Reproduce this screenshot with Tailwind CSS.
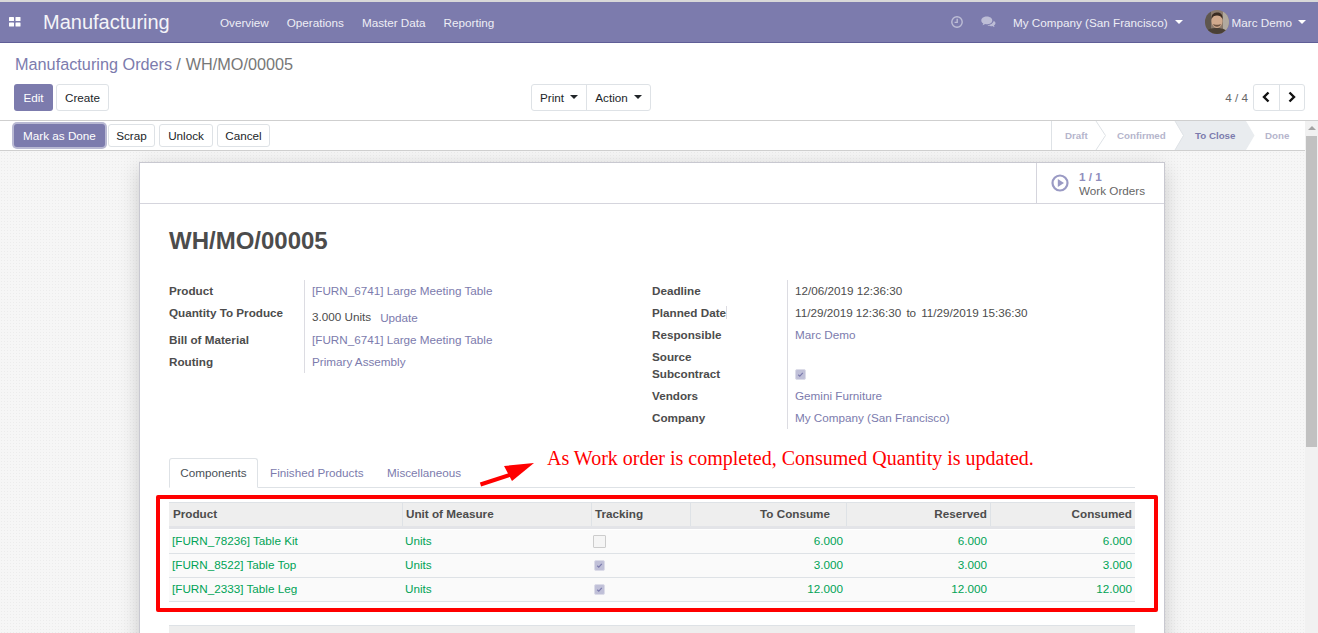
<!DOCTYPE html>
<html><head><meta charset="utf-8"><script src="https://cdn.jsdelivr.net/npm/@tailwindcss/browser@4"></script></head>
<body class="relative w-[1318px] h-[633px] overflow-hidden bg-white font-['Liberation_Sans',sans-serif] text-[13px] text-[#4c4c4c]">
<div class="flex flex-col h-[633px]">
  <!-- navbar -->
  <header class="h-[43px] shrink-0 border-t-2 border-t-[#d8d8d8] border-b border-b-[#5f5e97] bg-[#7c7bad] flex items-center text-white">
    <svg class="ml-[9px] w-[12px] h-[10px]" viewBox="0 0 12 10" fill="#fff"><rect x="0" y="0" width="5" height="4" rx=".6"/><rect x="6.5" y="0" width="5" height="4" rx=".6"/><rect x="0" y="5.5" width="5" height="4" rx=".6"/><rect x="6.5" y="5.5" width="5" height="4" rx=".6"/></svg>
    <span class="ml-[22px] text-[20px] w-[177px] text-[#f4f4f8]">Manufacturing</span>
    <nav class="flex gap-[18px] pt-px text-[#eeeef5] text-[11.7px]"><span>Overview</span><span>Operations</span><span>Master Data</span><span>Reporting</span></nav>
    <div class="ml-auto flex items-center text-[#eeeef5] text-[11.7px]">
      <svg class="w-[12px] h-[12px]" viewBox="0 0 12 12" fill="none" stroke="#bdbdd6" stroke-width="1.4"><circle cx="6" cy="6" r="5.2"/><path d="M6.2 2.8V6.4H3.6"/></svg>
      <svg class="ml-[18px] w-[15px] h-[12px]" viewBox="0 0 15 12" fill="#bdbdd6"><path d="M5.8 0.6C2.7 0.6 0.3 2.3 0.3 4.4c0 1.2.8 2.3 2 3-.1.7-.5 1.3-1 1.8 1.100-.1 2.100-.6 2.800-1.200.5.1 1.100.2 1.700.2 3.100 0 5.500-1.700 5.500-3.800S8.900.6 5.800.6z"/><path d="M12.400 3.900c.1.200.1.400.1.600 0 2.500-2.700 4.500-6.100 4.600.9.800 2.200 1.200 3.600 1.200.5 0 1-.1 1.400-.2.600.5 1.400.9 2.300 1-.4-.4-.7-.9-.8-1.500 1-.6 1.600-1.500 1.600-2.500 0-1-.8-1.800-2.100-2.200z"/></svg>
      <span class="ml-[17px] pt-px">My Company (San Francisco)</span>
      <i class="ml-[7px] w-0 h-0 border-x-[4px] border-x-transparent border-t-[4px] border-t-white"></i>
      <svg class="ml-[22px] w-[24px] h-[24px]" viewBox="0 0 24 24"><defs><clipPath id="av"><circle cx="12" cy="12" r="12"/></clipPath></defs><g clip-path="url(#av)"><rect width="24" height="24" fill="#8a7a6c"/><rect x="0" y="0" width="6" height="24" fill="#5e564f"/><rect x="18" y="0" width="6" height="24" fill="#b0a99f"/><path d="M0 24c1-5 6-6 12-6s10 2 12 6z" fill="#4a4036"/><ellipse cx="12" cy="11" rx="5.500" ry="7" fill="#d0a98c"/><path d="M6.500 9C6 3.500 10 2.500 12.500 2.500S18 4 17.500 9c-1-2.500-3-3.500-5.500-3.500S7.500 6.500 6.500 9z" fill="#3a2c22"/><path d="M8 14c1 3.500 7 3.500 8 0-1 1-7 1-8 0z" fill="#6d5443"/></g></svg>
      <span class="ml-[3px] pt-px">Marc Demo</span>
      <i class="ml-[6px] mr-[12px] w-0 h-0 border-x-[4px] border-x-transparent border-t-[4px] border-t-white"></i>
    </div>
  </header>
  <!-- control panel -->
  <section class="h-[78px] shrink-0 border-b border-[#cfcfcf] pl-[14px] pr-[13px] pt-[11px]">
    <div class="text-[16.25px] leading-[20px] pl-px h-[20px]"><span class="text-[#7c7bad]">Manufacturing Orders</span><span class="text-[#777] ml-[4px]">/</span><span class="text-[#777] ml-[5px]">WH/MO/00005</span></div>
    <div class="relative flex items-center mt-[10px] h-[27px]">
      <div class="flex gap-[3px] w-[517px]">
        <button class="h-[27px] w-[39px] rounded-[3px] bg-[#7c7bad] text-white text-[11.7px]">Edit</button>
        <button class="h-[27px] w-[53px] rounded-[3px] border border-[#dee2e6] text-[#212529] text-[11.7px]">Create</button>
      </div>
      <div class="flex h-[27px] border border-[#dee2e6] rounded-[3px] text-[#212529] text-[11.7px]">
        <span class="w-[55px] flex items-center justify-center gap-[6px] border-r border-[#dee2e6]">Print<i class="-mt-[2px] w-0 h-0 border-x-[4px] border-x-transparent border-t-[4px] border-t-[#212529]"></i></span>
        <span class="w-[63px] flex items-center justify-center gap-[6px]">Action<i class="-mt-[2px] w-0 h-0 border-x-[4px] border-x-transparent border-t-[4px] border-t-[#212529]"></i></span>
      </div>
      <div class="ml-auto flex items-center">
        <span class="mr-[5px] text-[#666] text-[11.7px]">4 / 4</span>
        <div class="flex h-[27px] border border-[#dee2e6] rounded-[3px] w-[52px]">
          <span class="w-[26px] border-r border-[#dee2e6] flex items-center justify-center"><svg class="w-[10px] h-[12px] -mt-[2px]" viewBox="0 0 10 12" fill="none" stroke="#111" stroke-width="2.400"><path d="M7.500 1.500 3 6l4.500 4.500"/></svg></span>
          <span class="w-[25px] flex items-center justify-center"><svg class="w-[10px] h-[12px] -mt-[2px]" viewBox="0 0 10 12" fill="none" stroke="#111" stroke-width="2.400"><path d="M2.500 1.500 7 6l-4.500 4.500"/></svg></span>
        </div>
      </div>
    </div>
  </section>
  <!-- body + scrollbar -->
  <div class="flex flex-1 min-h-0">
    <main class="flex-1 min-w-0 flex flex-col">
      <div class="h-[30px] shrink-0 border-b border-[#cfcfcf] flex items-center pl-[14px] text-[11.7px] text-[#212529]">
        <button class="h-[23px] w-[91px] rounded-[3px] bg-[#7c7bad] text-white shadow-[0_0_0_2px_#b9b9d3]">Mark as Done</button>
        <button class="ml-[3px] h-[23px] w-[47px] rounded-[3px] border border-[#dee2e6]">Scrap</button>
        <button class="ml-[4px] h-[23px] w-[54px] rounded-[3px] border border-[#dee2e6]">Unlock</button>
        <button class="ml-[4px] h-[23px] w-[53px] rounded-[3px] border border-[#dee2e6]">Cancel</button>
        <div class="ml-auto relative h-[29px] w-[254px] border-l border-[#dee2e6] text-[9.75px] font-bold text-[#b5b5cc]">
          <svg class="absolute inset-0" width="253" height="29" viewBox="0 0 253 29" fill="none"><path d="M123 0H194L202.500 14.500 194 29H123L131.500 14.500z" fill="#e9ecef"/><path d="M44 0 53.500 14.500 44 29" stroke="#dee2e6"/><path d="M123 0 131.500 14.500 123 29" stroke="#dee2e6"/></svg>
          <span class="absolute left-[13px] top-[8px]">Draft</span>
          <span class="absolute left-[65px] top-[8px]">Confirmed</span>
          <span class="absolute left-[143px] top-[8px] text-[#7c7bad]">To Close</span>
          <span class="absolute left-[213px] top-[8px]">Done</span>
        </div>
      </div>
      <div class="flex-1 min-h-0 overflow-hidden pl-[139px] pt-[11px] bg-[#f6f6f6] bg-[radial-gradient(#ececec_0.5px,transparent_0.6px)] bg-[length:3px_3px]">
        <article class="w-[1026px] h-[520px] bg-white border border-[#c8c8d0] shadow-[0_5px_20px_-1px_rgba(0,0,0,0.2)]">
          <div class="h-[41px] border-b border-[#d5d5dd] flex justify-end">
            <div class="w-[128px] border-l border-[#d5d5dd] flex items-center pl-[14px]">
              <svg class="w-[18px] h-[18px]" viewBox="0 0 18 18"><circle cx="9" cy="9" r="7.500" fill="none" stroke="#9a9ac4" stroke-width="2.200"/><path d="M6.800 4.900 13 9l-6.200 4.100z" fill="#9a9ac4"/></svg>
              <div class="ml-[10px] pt-px leading-[14px] text-[11.7px]"><div class="font-bold text-[#8f8ebd]">1 / 1</div><div class="text-[#666]">Work Orders</div></div>
            </div>
          </div>
          <div class="px-[29px]">
            <h1 class="mt-[24px] text-[24px] leading-[26px] font-bold text-[#4c4c4c]">WH/MO/00005</h1>
            <div class="mt-[26px] flex text-[11.7px]">
              <div class="w-[483px]">
                <div class="flex h-[22px] items-center"><b class="w-[135px]">Product</b><span class="self-stretch border-l border-[#dcdce2] pl-[7px] flex items-center text-[#7c7bad]">[FURN_6741] Large Meeting Table</span></div>
                <div class="flex h-[27px]"><b class="w-[135px] pt-[2px]">Quantity To Produce</b><span class="self-stretch border-l border-[#dcdce2] pl-[7px] pt-[6px]">3.000 Units<span class="ml-[9px] text-[#7c7bad] relative top-[1px]">Update</span></span></div>
                <div class="flex h-[22px] items-center"><b class="w-[135px]">Bill of Material</b><span class="self-stretch border-l border-[#dcdce2] pl-[7px] flex items-center text-[#7c7bad]">[FURN_6741] Large Meeting Table</span></div>
                <div class="flex h-[22px] items-center"><b class="w-[135px]">Routing</b><span class="self-stretch border-l border-[#dcdce2] pl-[7px] flex items-center text-[#7c7bad]">Primary Assembly</span></div>
              </div>
              <div>
                <div class="flex h-[22px] items-center"><b class="w-[135px]">Deadline</b><span class="self-stretch border-l border-[#dcdce2] pl-[7px] flex items-center">12/06/2019 12:36:30</span></div>
                <div class="flex h-[22px] items-center"><b class="w-[135px]"><span class="border-r border-[#dcdce2]">Planned Date</span></b><span class="self-stretch border-l border-[#dcdce2] pl-[7px] flex items-center">11/29/2019 12:36:30<span class="ml-[5px] mr-[5px]">to</span>11/29/2019 15:36:30</span></div>
                <div class="flex h-[22px] items-center"><b class="w-[135px]">Responsible</b><span class="self-stretch border-l border-[#dcdce2] pl-[7px] flex items-center text-[#7c7bad]">Marc Demo</span></div>
                <div class="flex h-[17px] items-center"><b class="w-[135px] pt-[4px]">Source</b><span class="self-stretch border-l border-[#dcdce2] pl-[7px]"></span></div>
                <div class="flex h-[22px] items-center"><b class="w-[135px]">Subcontract</b><span class="self-stretch border-l border-[#dcdce2] pl-[7px] flex items-center"><svg class="w-[11px] h-[11px]" viewBox="0 0 11 11"><rect x=".5" y=".5" width="10" height="10" rx="1.500" fill="#c0c0d8" stroke="#dcdce8"/><path d="M3.200 5.700 4.800 7.200 7.800 3.900" fill="none" stroke="#7c7bad" stroke-width="1.200"/></svg></span></div>
                <div class="flex h-[22px] items-center"><b class="w-[135px]">Vendors</b><span class="self-stretch border-l border-[#dcdce2] pl-[7px] flex items-center text-[#7c7bad]">Gemini Furniture</span></div>
                <div class="flex h-[22px] items-center"><b class="w-[135px]">Company</b><span class="self-stretch border-l border-[#dcdce2] pl-[7px] flex items-center text-[#7c7bad]">My Company (San Francisco)</span></div>
              </div>
            </div>
            <!-- tabs -->
            <div class="mt-[29px] h-[30px] border-b border-[#dee2e6] flex text-[11.7px] text-[#7c7bad]">
              <div class="w-[89px] h-[30px] border border-[#dee2e6] border-b-white rounded-t-[3px] flex items-center justify-center text-[#495057]">Components</div>
              <div class="ml-[12px] h-[30px] flex items-center">Finished Products</div>
              <div class="ml-[23.5px] h-[30px] flex items-center">Miscellaneous</div>
            </div>
            <!-- table -->
            <div class="mt-[14px] text-[11.7px]">
              <div class="flex h-[23px] items-center bg-[#eeeeee] border-t border-[#dee2e6] border-b-[3px] border-b-[#e3e4e8] mb-[1px] box-content font-bold text-[#4c4c4c] [&>div]:pb-[2px]">
                <div class="w-[233px] pl-[4px]">Product</div>
                <div class="w-[189px] pl-[3px] border-l border-[#dee2e6] h-full flex items-center">Unit of Measure</div>
                <div class="w-[99px] pl-[3px] border-l border-[#dee2e6] h-full flex items-center">Tracking</div>
                <div class="w-[156px] pr-[16px] border-l border-[#dee2e6] h-full flex items-center justify-end">To Consume</div>
                <div class="w-[144px] pr-[3px] border-l border-[#dee2e6] h-full flex items-center justify-end">Reserved</div>
                <div class="flex-1 pr-[3px] border-l border-[#dee2e6] h-full flex items-center justify-end">Consumed</div>
              </div>
              <div class="flex h-[24px] pb-[2px] items-center bg-[#fafafa] border-b border-[#dee2e6] text-[#00a356]">
                <div class="w-[233px] pl-[3px]">[FURN_78236] Table Kit</div><div class="w-[189px] pl-[3px]">Units</div>
                <div class="w-[99px] pl-[2px]"><i class="block relative top-px w-[13px] h-[13px] bg-[#f5f5f5] border border-[#ccc] rounded-[1px]"></i></div>
                <div class="w-[156px] pr-[3px] text-right">6.000</div><div class="w-[144px] pr-[3px] text-right">6.000</div><div class="flex-1 pr-[3px] text-right">6.000</div>
              </div>
              <div class="flex h-[24px] pb-[2px] items-center bg-[#fafafa] border-b border-[#dee2e6] text-[#00a356]">
                <div class="w-[233px] pl-[3px]">[FURN_8522] Table Top</div><div class="w-[189px] pl-[3px]">Units</div>
                <div class="w-[99px] pl-[3px] h-[11px]"><svg class="block relative top-px w-[11px] h-[11px]" viewBox="0 0 11 11"><rect x=".5" y=".5" width="10" height="10" rx="1.500" fill="#c0c0d8" stroke="#dcdce8"/><path d="M3.200 5.700 4.800 7.200 7.800 3.900" fill="none" stroke="#7c7bad" stroke-width="1.200"/></svg></div>
                <div class="w-[156px] pr-[3px] text-right">3.000</div><div class="w-[144px] pr-[3px] text-right">3.000</div><div class="flex-1 pr-[3px] text-right">3.000</div>
              </div>
              <div class="flex h-[24px] pb-[2px] items-center bg-[#fafafa] border-b border-[#dee2e6] text-[#00a356]">
                <div class="w-[233px] pl-[3px]">[FURN_2333] Table Leg</div><div class="w-[189px] pl-[3px]">Units</div>
                <div class="w-[99px] pl-[3px] h-[11px]"><svg class="block relative top-px w-[11px] h-[11px]" viewBox="0 0 11 11"><rect x=".5" y=".5" width="10" height="10" rx="1.500" fill="#c0c0d8" stroke="#dcdce8"/><path d="M3.200 5.700 4.800 7.200 7.800 3.900" fill="none" stroke="#7c7bad" stroke-width="1.200"/></svg></div>
                <div class="w-[156px] pr-[3px] text-right">12.000</div><div class="w-[144px] pr-[3px] text-right">12.000</div><div class="flex-1 pr-[3px] text-right">12.000</div>
              </div>
              <div class="mt-[23px] h-[20px] bg-[#eeeeee] border-t border-[#dee2e6]"></div>
            </div>
          </div>
        </article>
      </div>
    </main>
    <!-- scrollbar -->
    <div class="w-[13px] shrink-0 bg-[#f1f1f1] flex flex-col items-center pt-[5px] relative">
      <i class="w-0 h-0 border-x-[4px] border-x-transparent border-b-[4px] border-b-[#a3a3a3]"></i>
      <div class="mt-[6px] w-[11px] h-[311px] bg-[#c1c1c1]"></div>
    </div>
  </div>
</div>
<!-- annotation overlay -->
<div class="absolute left-[156px] top-[495px] w-[1002px] h-[117px] border-[4px] border-[#ff0000] rounded-[2px]"></div>
<div class="absolute left-[547px] top-[446px] font-['Liberation_Serif',serif] text-[20px] leading-[24px] text-[#ff0000] whitespace-nowrap">As Work order is completed, Consumed Quantity is updated.</div>
<svg class="absolute left-[478px] top-[460px]" width="60" height="28" viewBox="0 0 60 28"><path d="M2.500 24.500 33 14.500" stroke="#f00" stroke-width="4" fill="none"/><path d="M56 3 26 6 34 21z" fill="#f00"/></svg>
</body></html>
